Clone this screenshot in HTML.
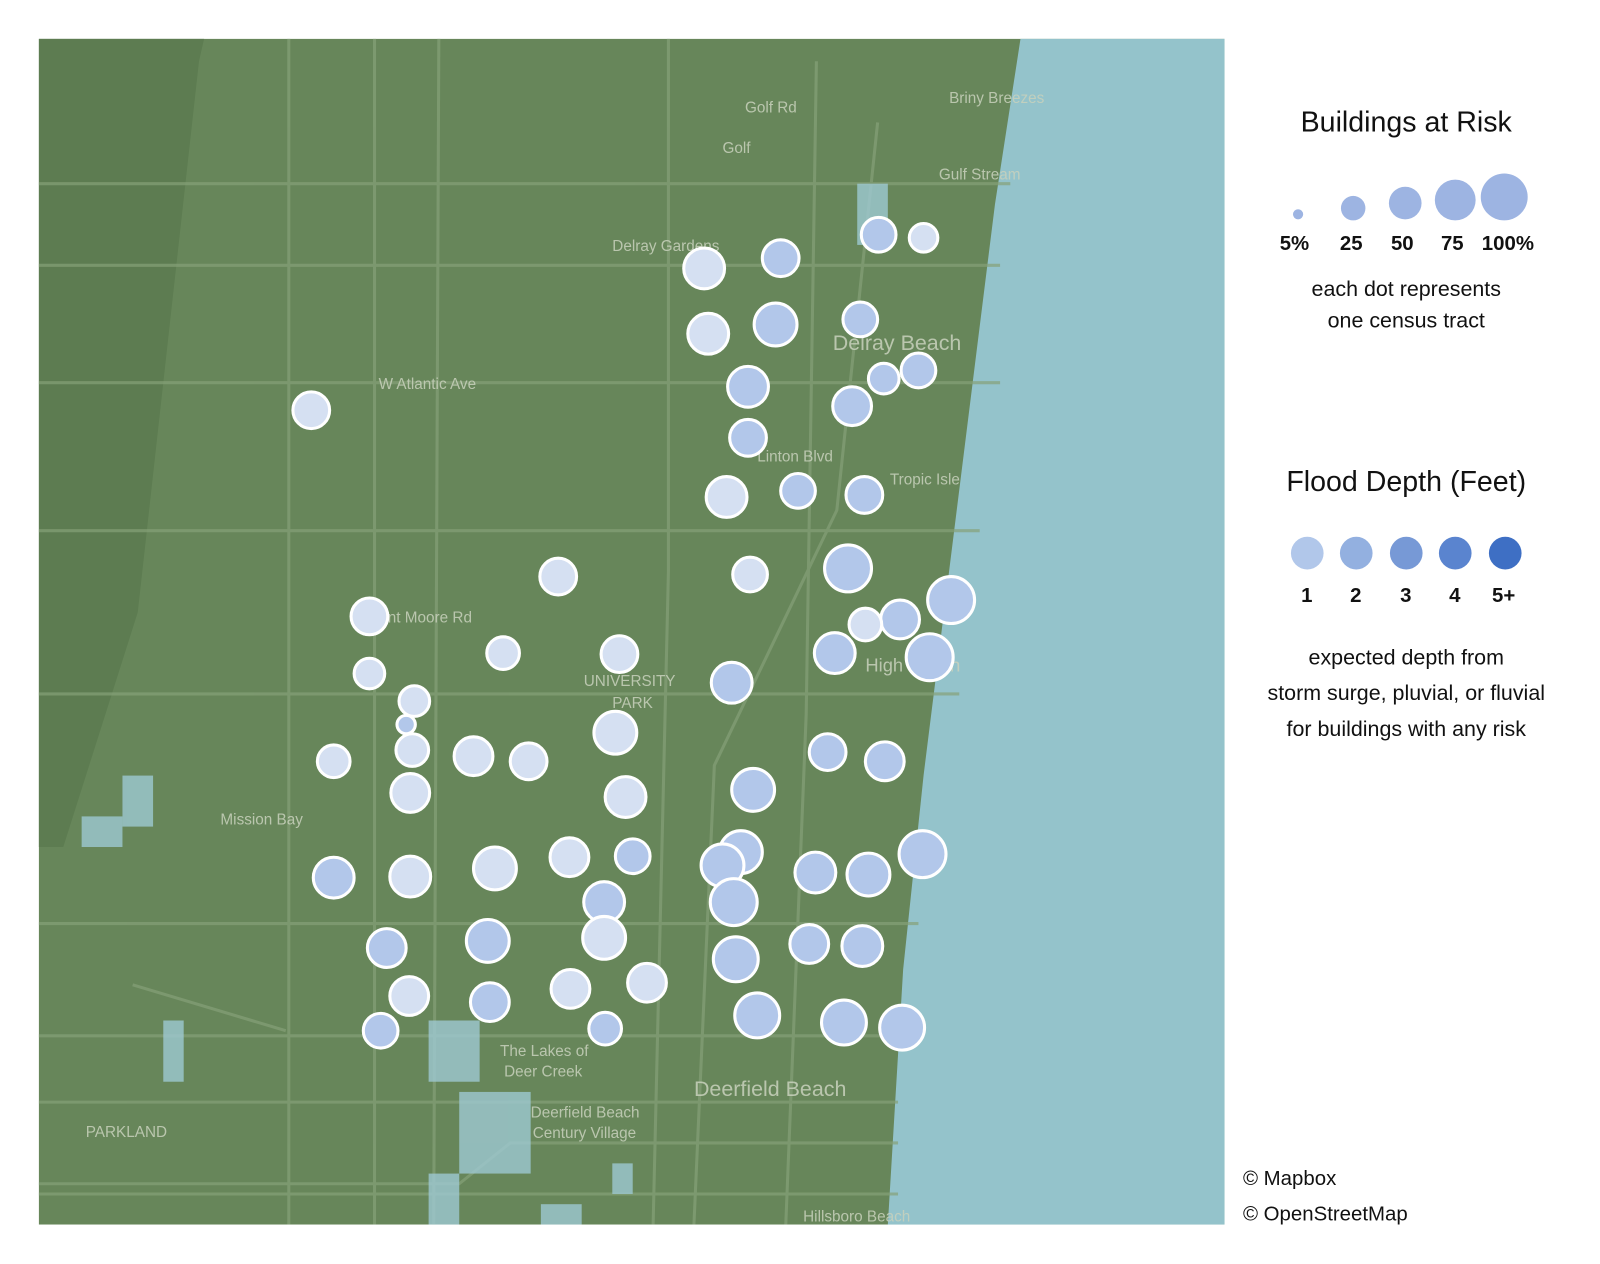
<!DOCTYPE html>
<html><head><meta charset="utf-8"><style>
html,body{margin:0;padding:0;background:#fff;width:1600px;height:1264px;overflow:hidden}
#w{position:absolute;left:0;top:0;width:1560px;height:1232px;transform:scale(1.0205);transform-origin:0 0;font-family:"Liberation Sans",sans-serif}
.t{position:absolute;color:#111;text-align:center}
</style></head><body><div id="w">
<svg width="1560" height="1232" style="position:absolute;left:0;top:0">
<defs><clipPath id="c"><rect x="38" y="38" width="1162" height="1162"/></clipPath></defs>
<g clip-path="url(#c)">
<rect x="38" y="38" width="1162" height="1162" fill="#67865a"/>
<path d="M38 38 H200 L195 60 L135 600 L62 830 H38 Z" fill="#5d7c51"/>
<path d="M1000 38 L975 200 L950 400 L930 560 L905 760 L885 950 L870 1200 H1200 V38 Z" fill="#94c3cb"/>
<g stroke="#86a178" stroke-width="3" fill="none" opacity="0.7">
<path d="M283 38 V1200"/><path d="M430 38 L425 1200"/><path d="M367 38 V1200"/><path d="M655 38 V560 L640 1200"/>
<path d="M800 60 L790 700 L770 1200"/><path d="M38 375 H980"/><path d="M38 520 H960"/><path d="M38 680 H940"/>
<path d="M38 905 H900"/><path d="M38 1015 H890"/><path d="M38 1080 H880"/><path d="M38 1170 H880"/>
<path d="M130 965 L280 1010"/><path d="M38 1160 L450 1160 L500 1120 L880 1120"/>
<path d="M860 120 L820 500 L700 750 L680 1200"/><path d="M38 260 H980"/><path d="M38 180 H990"/>
</g>
<g fill="#9ec9d2" opacity="0.8">
<rect x="420" y="1000" width="50" height="60"/><rect x="450" y="1070" width="70" height="80"/><rect x="420" y="1150" width="30" height="50"/>
<rect x="530" y="1180" width="40" height="20"/><rect x="80" y="800" width="40" height="30"/><rect x="120" y="760" width="30" height="50"/>
<rect x="160" y="1000" width="20" height="60"/><rect x="600" y="1140" width="20" height="30"/><rect x="840" y="180" width="30" height="60"/>
</g>
<g fill="#c9d2bd" font-size="15" font-family="Liberation Sans,sans-serif" opacity="0.85">
<text x="930" y="101">Briny Breezes</text><text x="920" y="176">Gulf Stream</text><text x="730" y="110">Golf Rd</text>
<text x="816" y="343" font-size="21">Delray Beach</text><text x="371" y="381">W Atlantic Ave</text><text x="600" y="246">Delray Gardens</text>
<text x="742" y="452">Linton Blvd</text><text x="872" y="475">Tropic Isle</text><text x="380" y="610">nt Moore Rd</text>
<text x="848" y="658" font-size="18">High    Beach</text><text x="572" y="672">UNIVERSITY</text><text x="600" y="694">PARK</text>
<text x="216" y="808">Mission Bay</text><text x="680" y="1074" font-size="21">Deerfield Beach</text><text x="490" y="1035">The Lakes of</text>
<text x="494" y="1055">Deer Creek</text><text x="520" y="1095">Deerfield Beach</text><text x="522" y="1115">Century Village</text>
<text x="84" y="1114">PARKLAND</text><text x="787" y="1197">Hillsboro Beach</text><text x="708" y="150">Golf</text>
</g>
</g>
<g stroke="#fff" stroke-width="3">
<g fill="#b2c7ea">
<circle cx="861" cy="230" r="17"/><circle cx="765" cy="253" r="18"/><circle cx="760" cy="318" r="21"/><circle cx="843" cy="313" r="17"/><circle cx="733" cy="379" r="20"/><circle cx="866" cy="371" r="15"/><circle cx="900" cy="363" r="17"/><circle cx="835" cy="398" r="19"/><circle cx="733" cy="429" r="18"/><circle cx="782" cy="481" r="17"/><circle cx="847" cy="485" r="18"/><circle cx="831" cy="557" r="23"/><circle cx="932" cy="588" r="23"/><circle cx="882" cy="607" r="19"/><circle cx="818" cy="640" r="20"/><circle cx="911" cy="644" r="23"/><circle cx="717" cy="669" r="20"/><circle cx="398" cy="710" r="9"/><circle cx="811" cy="737" r="18"/><circle cx="867" cy="746" r="19"/><circle cx="738" cy="774" r="21"/><circle cx="726" cy="835" r="21"/><circle cx="708" cy="848" r="21"/><circle cx="904" cy="837" r="23"/><circle cx="327" cy="860" r="20"/><circle cx="620" cy="839" r="17"/><circle cx="799" cy="855" r="20"/><circle cx="851" cy="857" r="21"/><circle cx="592" cy="884" r="20"/><circle cx="719" cy="884" r="23"/><circle cx="379" cy="929" r="19"/><circle cx="478" cy="922" r="21"/><circle cx="721" cy="940" r="22"/><circle cx="793" cy="925" r="19"/><circle cx="845" cy="927" r="20"/><circle cx="480" cy="982" r="19"/><circle cx="742" cy="995" r="22"/><circle cx="827" cy="1002" r="22"/><circle cx="884" cy="1007" r="22"/><circle cx="373" cy="1010" r="17"/><circle cx="593" cy="1008" r="16"/>
</g>
<g fill="#d5e0f2">
<circle cx="905" cy="233" r="14"/><circle cx="690" cy="263" r="20"/><circle cx="694" cy="327" r="20"/><circle cx="305" cy="402" r="18"/><circle cx="712" cy="487" r="20"/><circle cx="547" cy="565" r="18"/><circle cx="735" cy="563" r="17"/><circle cx="362" cy="604" r="18"/><circle cx="848" cy="612" r="16"/><circle cx="493" cy="640" r="16"/><circle cx="607" cy="641" r="18"/><circle cx="362" cy="660" r="15"/><circle cx="406" cy="687" r="15"/><circle cx="603" cy="718" r="21"/><circle cx="327" cy="746" r="16"/><circle cx="404" cy="735" r="16"/><circle cx="464" cy="741" r="19"/><circle cx="518" cy="746" r="18"/><circle cx="402" cy="777" r="19"/><circle cx="613" cy="781" r="20"/><circle cx="402" cy="859" r="20"/><circle cx="485" cy="851" r="21"/><circle cx="558" cy="840" r="19"/><circle cx="592" cy="919" r="21"/><circle cx="401" cy="976" r="19"/><circle cx="559" cy="969" r="19"/><circle cx="634" cy="963" r="19"/>
</g>
</g>
<g fill="#9db4e2">
<circle cx="1272" cy="210" r="5"/><circle cx="1326" cy="204" r="12"/><circle cx="1377" cy="199" r="16"/><circle cx="1426" cy="196" r="20"/><circle cx="1474" cy="193" r="23"/>
</g>
<circle cx="1281" cy="542" r="16" fill="#b1c7ea"/><circle cx="1329" cy="542" r="16" fill="#93b0e0"/><circle cx="1378" cy="542" r="16" fill="#7799d6"/><circle cx="1426" cy="542" r="16" fill="#5a84cf"/><circle cx="1475" cy="542" r="16" fill="#3e6fc4"/>
</svg>
<div class="t" style="left:1226px;top:104px;width:304px;font-size:28px">Buildings at Risk</div>
<div class="t" style="left:1230px;top:228px;width:296px;font-size:20px;font-weight:bold">
<span style="position:absolute;left:24px">5%</span><span style="position:absolute;left:83px">25</span><span style="position:absolute;left:133px">50</span><span style="position:absolute;left:182px">75</span><span style="position:absolute;left:222px">100%</span></div>
<div class="t" style="left:1230px;top:268px;width:296px;font-size:21px;line-height:31px">each dot represents<br>one census tract</div>
<div class="t" style="left:1218px;top:456px;width:320px;font-size:28px">Flood Depth (Feet)</div>
<div class="t" style="left:1230px;top:573px;width:296px;font-size:20px;font-weight:bold">
<span style="position:absolute;left:45px">1</span><span style="position:absolute;left:93px">2</span><span style="position:absolute;left:142px">3</span><span style="position:absolute;left:190px">4</span><span style="position:absolute;left:232px">5+</span></div>
<div class="t" style="left:1198px;top:627px;width:360px;font-size:21px;line-height:35px">expected depth from<br>storm surge, pluvial, or fluvial<br>for buildings with any risk</div>
<div class="t" style="left:1218px;top:1138px;text-align:left;font-size:20px;line-height:35px">© Mapbox<br>© OpenStreetMap</div>
</div></body></html>
